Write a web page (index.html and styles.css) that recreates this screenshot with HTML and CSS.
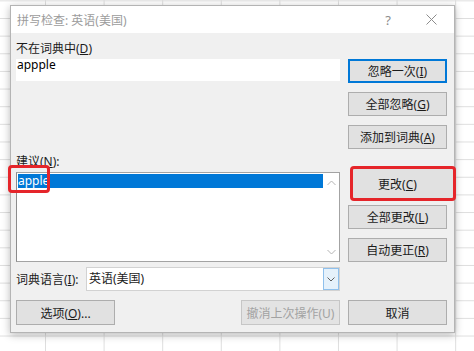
FILE: index.html
```html
<!DOCTYPE html>
<html lang="zh-CN">
<head>
    <meta charset="UTF-8">
    <title>拼写检查</title>
    <link rel="stylesheet" href="styles.css">
</head>
<body>

<div class="dialog">
    <div class="titlebar">
        <span class="title">拼写检查: 英语(美国)</span>
        <span class="help">?</span>
        <span class="close">
            <svg width="11" height="11" viewBox="0 0 11 11"><path d="M0.5 0.5 L10.5 10.5 M10.5 0.5 L0.5 10.5" stroke="#8c8c8c" stroke-width="1" fill="none"/></svg>
        </span>
    </div>

    <div class="content">
        <div class="main">
            <div class="left">
                <div class="label">不在词典中(<u>D</u>)</div>
                <div class="field">appple</div>
                <div class="label push">建议(<u>N</u>):</div>
                <div class="listbox">
                    <div class="items">
                        <div class="item selected"><span class="mark">apple</span></div>
                    </div>
                    <div class="scroll">
                        <svg width="9" height="6" viewBox="0 0 9 6"><path d="M0.5 5 L4.5 1 L8.5 5" stroke="#b4b4b4" fill="none"/></svg>
                        <svg width="9" height="6" viewBox="0 0 9 6"><path d="M0.5 1 L4.5 5 L8.5 1" stroke="#b4b4b4" fill="none"/></svg>
                    </div>
                </div>
            </div>

            <div class="actions">
                <button class="btn default">忽略一次(<u>I</u>)</button>
                <button class="btn">全部忽略(<u>G</u>)</button>
                <button class="btn">添加到词典(<u>A</u>)</button>
                <button class="btn marked group">更改(<u>C</u>)</button>
                <button class="btn">全部更改(<u>L</u>)</button>
                <button class="btn">自动更正(<u>R</u>)</button>
            </div>
        </div>

        <div class="lang-row">
            <span class="label">词典语言(<u>I</u>):</span>
            <div class="combo">
                <span class="combo-text">英语(美国)</span>
                <span class="combo-arrow">
                    <svg width="8" height="5" viewBox="0 0 8 5"><path d="M0.5 0.5 L4 4 L7.5 0.5" stroke="#606060" fill="none"/></svg>
                </span>
            </div>
        </div>

        <div class="bottom-row">
            <button class="btn">选项(<u>O</u>)...</button>
            <button class="btn disabled push-right">撤消上次操作(U)</button>
            <button class="btn">取消</button>
        </div>
    </div>
</div>

</body>
</html>
```

FILE: styles.css
```css
html, body {
    margin: 0;
    padding: 0;
    height: 100%;
}
body {
    background-color: #ffffff;
    background-image:
        linear-gradient(to right, #dedede 1px, transparent 1px),
        linear-gradient(#dedede 1px, transparent 1px);
    background-size: 58.6px 100%, 100% 17.65px;
    background-position: 45px 0, 0 18px;
    font-family: "Noto Sans", "Noto Sans CJK SC", sans-serif;
    font-size: 12px;
    color: #1b1b1b;
    padding-top: 5px;
    box-sizing: border-box;
}
.dialog {
    margin-left: 10px;
    width: 445px;
    box-sizing: border-box;
    border: 1px solid #b4b4b4;
    background: #f0f0f0;
    box-shadow: 0 2px 8px rgba(0, 0, 0, 0.28);
}
.titlebar {
    height: 27px;
    background: #ffffff;
    display: flex;
    align-items: center;
    padding-left: 6px;
}
.title {
    flex: 1;
    color: #9c9c9c;
}
.help {
    width: 40px;
    text-align: center;
    color: #8c8c8c;
    font-size: 13px;
}
.close {
    width: 46px;
    display: flex;
    justify-content: center;
    align-items: center;
}
.content {
    padding: 7px 7px 7px 5px;
}
.main {
    display: flex;
    gap: 8px;
}
.left {
    width: 324px;
    display: flex;
    flex-direction: column;
}
.label {
    line-height: 17px;
    margin-bottom: 2px;
}
.label.push {
    margin-top: auto;
    margin-bottom: 2.5px;
}
.field {
    height: 22px;
    background: #ffffff;
    padding: 0 1px;
    line-height: 12px;
    color: #000;
}
.listbox {
    height: 90px;
    box-sizing: border-box;
    border: 1px solid #a3a3a3;
    border-left-color: #8c8c8c;
    background: #ffffff;
    display: flex;
    padding: 1px 0 1px 1px;
}
.items {
    flex: 1;
}
.item {
    height: 14px;
    line-height: 14px;
}
.item.selected {
    background: #0078d7;
    color: #ffffff;
}
.mark {
    position: relative;
}
.mark::after {
    content: "";
    position: absolute;
    left: -10px;
    top: -7px;
    width: 42px;
    height: 28px;
    box-sizing: border-box;
    border: 3px solid #e5252a;
    border-radius: 4px;
}
.scroll {
    width: 16px;
    display: flex;
    flex-direction: column;
    justify-content: space-between;
    align-items: center;
    padding: 6px 0 5px;
}
.actions {
    width: 99px;
    padding-top: 19px;
    display: flex;
    flex-direction: column;
    gap: 9px;
}
.btn {
    height: 24px;
    box-sizing: border-box;
    border: 1px solid #adadad;
    background: #e1e1e1;
    font-family: inherit;
    font-size: 12px;
    color: #1b1b1b;
    padding: 0;
    margin: 0;
    width: 99px;
}
.btn.default {
    border: 2px solid #0078d7;
}
.btn.group {
    margin-top: 14px;
}
.btn.marked {
    position: relative;
    z-index: 0;
    border-color: transparent;
    background: transparent;
}
.btn.marked::before {
    content: "";
    position: absolute;
    left: 1px;
    top: -7px;
    right: -10px;
    bottom: -6px;
    border: 3px solid #e5252a;
    border-radius: 4px;
    background: #e1e1e1;
    z-index: -1;
}
.btn.disabled {
    color: #a2a2a2;
    border-color: #c6c6c6;
    background: #e3e3e3;
}
.lang-row {
    width: 324px;
    margin-top: 5px;
    display: flex;
    justify-content: space-between;
    align-items: center;
}
.lang-row .label {
    margin: 0;
}
.combo {
    width: 254px;
    height: 24px;
    box-sizing: border-box;
    border: 1px solid #d2d2d2;
    background: #ffffff;
    display: flex;
}
.combo-text {
    flex: 1;
    line-height: 22px;
    padding-left: 2px;
}
.combo-arrow {
    width: 16px;
    box-sizing: border-box;
    border: 1px solid #8fc0ec;
    background: #e5f1fb;
    display: flex;
    align-items: center;
    justify-content: center;
}
.bottom-row {
    margin-top: 9px;
    display: flex;
    gap: 8px;
}
.bottom-row .btn {
    height: 25px;
}
.push-right {
    margin-left: auto;
}
```
